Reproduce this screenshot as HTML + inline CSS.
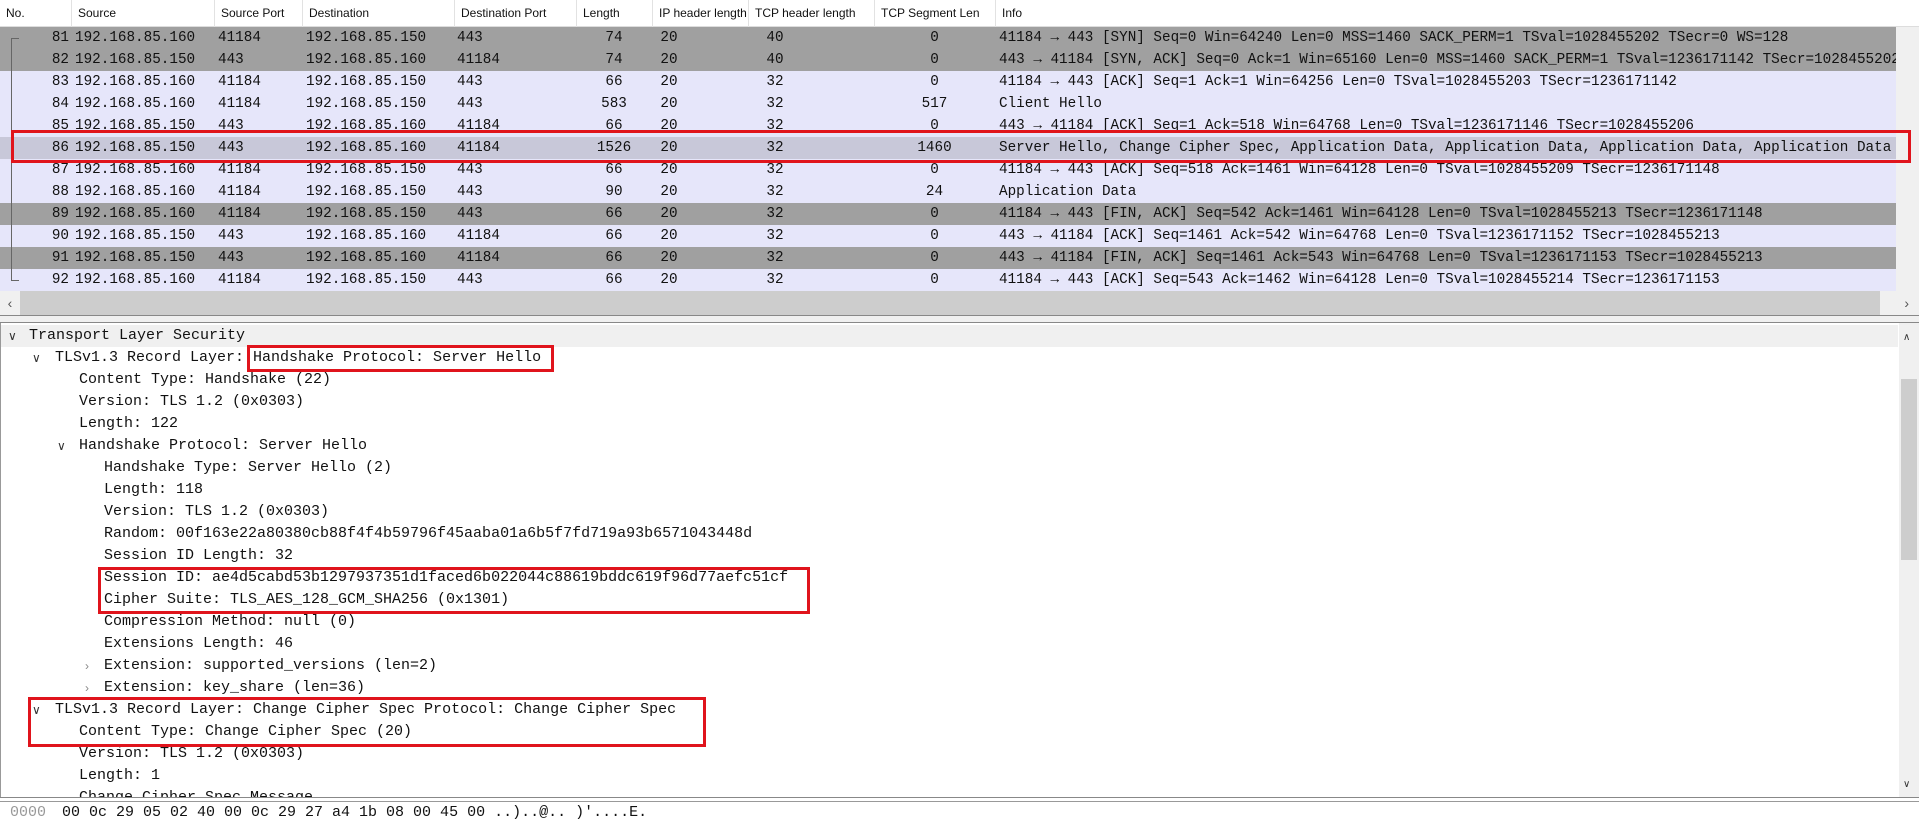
<!DOCTYPE html>
<html><head><meta charset="utf-8"><style>
*{margin:0;padding:0;box-sizing:border-box}
body{width:1919px;height:814px;overflow:hidden;background:#fff;position:relative;font-family:"Liberation Mono",monospace;color:#111}
.hdr{position:absolute;left:0;top:0;width:1919px;height:27px;background:#fff;border-bottom:1px solid #ddd;font-family:"Liberation Sans",sans-serif;font-size:12px}
.hdr span{position:absolute;top:0;line-height:27px;padding-left:6px;border-left:1px solid #e2e2e2;height:27px}
.r{position:absolute;left:0;width:1896px;height:22px;font-size:14.3px;line-height:22px;white-space:nowrap;overflow:hidden}
.r span{position:absolute;top:0}
.d{background:#a0a0a0}.l{background:#e6e6fa}.s{background:#c8c8d9}
.no{left:0;width:69px;text-align:right}.src{left:75px}.sp{left:218px}.dst{left:306px}.dp{left:457px}
.len{left:576px;width:76px;text-align:center}.ip{left:640px;width:58px;text-align:center}.tcp{left:740px;width:70px;text-align:center}.seg{left:874px;width:121px;text-align:center}.info{left:999px}
.box{position:absolute;border:3px solid #e0141c}
.t{position:absolute;font-size:15px;line-height:22px;white-space:nowrap}
.cv{position:absolute;font-family:"Liberation Sans",sans-serif;font-size:12px;line-height:22px;color:#333}
</style></head><body>
<div class="hdr">
<span style="left:0;border:none">No.</span><span style="left:71px">Source</span><span style="left:214px">Source Port</span><span style="left:302px">Destination</span><span style="left:454px">Destination Port</span><span style="left:576px">Length</span><span style="left:652px">IP header length</span><span style="left:748px">TCP header length</span><span style="left:874px">TCP Segment Len</span><span style="left:995px">Info</span>
</div>
<div style="position:absolute;left:1896px;top:27px;width:23px;height:288px;background:#f0f0f0"></div>

<div class="r d" style="top:27px"><span class="no">81</span><span class="src">192.168.85.160</span><span class="sp">41184</span><span class="dst">192.168.85.150</span><span class="dp">443</span><span class="len">74</span><span class="ip">20</span><span class="tcp">40</span><span class="seg">0</span><span class="info">41184 → 443 [SYN] Seq=0 Win=64240 Len=0 MSS=1460 SACK_PERM=1 TSval=1028455202 TSecr=0 WS=128</span></div>
<div class="r d" style="top:49px"><span class="no">82</span><span class="src">192.168.85.150</span><span class="sp">443</span><span class="dst">192.168.85.160</span><span class="dp">41184</span><span class="len">74</span><span class="ip">20</span><span class="tcp">40</span><span class="seg">0</span><span class="info">443 → 41184 [SYN, ACK] Seq=0 Ack=1 Win=65160 Len=0 MSS=1460 SACK_PERM=1 TSval=1236171142 TSecr=1028455202</span></div>
<div class="r l" style="top:71px"><span class="no">83</span><span class="src">192.168.85.160</span><span class="sp">41184</span><span class="dst">192.168.85.150</span><span class="dp">443</span><span class="len">66</span><span class="ip">20</span><span class="tcp">32</span><span class="seg">0</span><span class="info">41184 → 443 [ACK] Seq=1 Ack=1 Win=64256 Len=0 TSval=1028455203 TSecr=1236171142</span></div>
<div class="r l" style="top:93px"><span class="no">84</span><span class="src">192.168.85.160</span><span class="sp">41184</span><span class="dst">192.168.85.150</span><span class="dp">443</span><span class="len">583</span><span class="ip">20</span><span class="tcp">32</span><span class="seg">517</span><span class="info">Client Hello</span></div>
<div class="r l" style="top:115px"><span class="no">85</span><span class="src">192.168.85.150</span><span class="sp">443</span><span class="dst">192.168.85.160</span><span class="dp">41184</span><span class="len">66</span><span class="ip">20</span><span class="tcp">32</span><span class="seg">0</span><span class="info">443 → 41184 [ACK] Seq=1 Ack=518 Win=64768 Len=0 TSval=1236171146 TSecr=1028455206</span></div>
<div class="r s" style="top:137px"><span class="no">86</span><span class="src">192.168.85.150</span><span class="sp">443</span><span class="dst">192.168.85.160</span><span class="dp">41184</span><span class="len">1526</span><span class="ip">20</span><span class="tcp">32</span><span class="seg">1460</span><span class="info">Server Hello, Change Cipher Spec, Application Data, Application Data, Application Data, Application Data</span></div>
<div class="r l" style="top:159px"><span class="no">87</span><span class="src">192.168.85.160</span><span class="sp">41184</span><span class="dst">192.168.85.150</span><span class="dp">443</span><span class="len">66</span><span class="ip">20</span><span class="tcp">32</span><span class="seg">0</span><span class="info">41184 → 443 [ACK] Seq=518 Ack=1461 Win=64128 Len=0 TSval=1028455209 TSecr=1236171148</span></div>
<div class="r l" style="top:181px"><span class="no">88</span><span class="src">192.168.85.160</span><span class="sp">41184</span><span class="dst">192.168.85.150</span><span class="dp">443</span><span class="len">90</span><span class="ip">20</span><span class="tcp">32</span><span class="seg">24</span><span class="info">Application Data</span></div>
<div class="r d" style="top:203px"><span class="no">89</span><span class="src">192.168.85.160</span><span class="sp">41184</span><span class="dst">192.168.85.150</span><span class="dp">443</span><span class="len">66</span><span class="ip">20</span><span class="tcp">32</span><span class="seg">0</span><span class="info">41184 → 443 [FIN, ACK] Seq=542 Ack=1461 Win=64128 Len=0 TSval=1028455213 TSecr=1236171148</span></div>
<div class="r l" style="top:225px"><span class="no">90</span><span class="src">192.168.85.150</span><span class="sp">443</span><span class="dst">192.168.85.160</span><span class="dp">41184</span><span class="len">66</span><span class="ip">20</span><span class="tcp">32</span><span class="seg">0</span><span class="info">443 → 41184 [ACK] Seq=1461 Ack=542 Win=64768 Len=0 TSval=1236171152 TSecr=1028455213</span></div>
<div class="r d" style="top:247px"><span class="no">91</span><span class="src">192.168.85.150</span><span class="sp">443</span><span class="dst">192.168.85.160</span><span class="dp">41184</span><span class="len">66</span><span class="ip">20</span><span class="tcp">32</span><span class="seg">0</span><span class="info">443 → 41184 [FIN, ACK] Seq=1461 Ack=543 Win=64768 Len=0 TSval=1236171153 TSecr=1028455213</span></div>
<div class="r l" style="top:269px"><span class="no">92</span><span class="src">192.168.85.160</span><span class="sp">41184</span><span class="dst">192.168.85.150</span><span class="dp">443</span><span class="len">66</span><span class="ip">20</span><span class="tcp">32</span><span class="seg">0</span><span class="info">41184 → 443 [ACK] Seq=543 Ack=1462 Win=64128 Len=0 TSval=1028455214 TSecr=1236171153</span></div>
<div style="position:absolute;left:11px;top:38px;width:1px;height:242px;background:#666"></div>
<div style="position:absolute;left:11px;top:38px;width:8px;height:1px;background:#666"></div>
<div style="position:absolute;left:11px;top:280px;width:8px;height:1px;background:#666"></div>

<div style="position:absolute;left:0;top:291px;width:1919px;height:24px;background:#cdcdcd"></div>
<div style="position:absolute;left:0;top:291px;width:20px;height:24px;background:#f0f0f0;font:14px 'Liberation Sans',sans-serif;line-height:24px;text-align:center;color:#555">‹</div>
<div style="position:absolute;left:1880px;top:291px;width:39px;height:24px;background:#f0f0f0;font:14px 'Liberation Sans',sans-serif;line-height:24px;text-align:right;padding-right:10px;color:#555">›</div>
<div style="position:absolute;left:0;top:315px;width:1919px;height:1px;background:#888"></div>
<div style="position:absolute;left:0;top:316px;width:1919px;height:6px;background:#f0f0f0"></div>
<div style="position:absolute;left:0;top:322px;width:1919px;height:1px;background:#888"></div>

<div style="position:absolute;left:0;top:323px;width:1px;height:474px;background:#999"></div>
<div style="position:absolute;left:1px;top:325px;width:1897px;height:22px;background:#f0f0f0"></div>
<div style="position:absolute;left:1899px;top:323px;width:20px;height:474px;background:#f0f0f0"></div>
<div style="position:absolute;left:1901px;top:379px;width:16px;height:181px;background:#cdcdcd"></div>
<div class="cv" style="left:1903px;top:327px;font-size:10px">∧</div>
<div class="cv" style="left:1903px;top:774px;font-size:10px">∨</div>

<div class="cv" style="left:8px;top:325px">∨</div><div class="t" style="left:29px;top:325px">Transport Layer Security</div>
<div class="cv" style="left:32px;top:347px">∨</div><div class="t" style="left:55px;top:347px">TLSv1.3 Record Layer: Handshake Protocol: Server Hello</div>
<div class="t" style="left:79px;top:369px">Content Type: Handshake (22)</div>
<div class="t" style="left:79px;top:391px">Version: TLS 1.2 (0x0303)</div>
<div class="t" style="left:79px;top:413px">Length: 122</div>
<div class="cv" style="left:57px;top:435px">∨</div><div class="t" style="left:79px;top:435px">Handshake Protocol: Server Hello</div>
<div class="t" style="left:104px;top:457px">Handshake Type: Server Hello (2)</div>
<div class="t" style="left:104px;top:479px">Length: 118</div>
<div class="t" style="left:104px;top:501px">Version: TLS 1.2 (0x0303)</div>
<div class="t" style="left:104px;top:523px">Random: 00f163e22a80380cb88f4f4b59796f45aaba01a6b5f7fd719a93b6571043448d</div>
<div class="t" style="left:104px;top:545px">Session ID Length: 32</div>
<div class="t" style="left:104px;top:567px">Session ID: ae4d5cabd53b1297937351d1faced6b022044c88619bddc619f96d77aefc51cf</div>
<div class="t" style="left:104px;top:589px">Cipher Suite: TLS_AES_128_GCM_SHA256 (0x1301)</div>
<div class="t" style="left:104px;top:611px">Compression Method: null (0)</div>
<div class="t" style="left:104px;top:633px">Extensions Length: 46</div>
<div class="cv" style="left:85px;top:655px;color:#888">›</div><div class="t" style="left:104px;top:655px">Extension: supported_versions (len=2)</div>
<div class="cv" style="left:85px;top:677px;color:#888">›</div><div class="t" style="left:104px;top:677px">Extension: key_share (len=36)</div>
<div class="cv" style="left:32px;top:699px">∨</div><div class="t" style="left:55px;top:699px">TLSv1.3 Record Layer: Change Cipher Spec Protocol: Change Cipher Spec</div>
<div class="t" style="left:79px;top:721px">Content Type: Change Cipher Spec (20)</div>
<div class="t" style="left:79px;top:743px">Version: TLS 1.2 (0x0303)</div>
<div class="t" style="left:79px;top:765px">Length: 1</div>
<div class="t" style="left:79px;top:787px">Change Cipher Spec Message</div>

<div style="position:absolute;left:0;top:797px;width:1919px;height:17px;background:#fff;border-top:1px solid #888"></div>
<div style="position:absolute;left:0;top:801px;width:1919px;height:1px;background:#999"></div>
<div class="t" style="left:10px;top:802px;color:#999">0000</div>
<div class="t" style="left:62px;top:802px">00 0c 29 05 02 40 00 0c  29 27 a4 1b 08 00 45 00   ..)..@.. )'....E.</div>

<div class="box" style="left:11px;top:130px;width:1900px;height:33px"></div>
<div class="box" style="left:247px;top:345px;width:307px;height:27px"></div>
<div class="box" style="left:98px;top:567px;width:712px;height:47px"></div>
<div class="box" style="left:28px;top:697px;width:678px;height:50px"></div>
</body></html>
